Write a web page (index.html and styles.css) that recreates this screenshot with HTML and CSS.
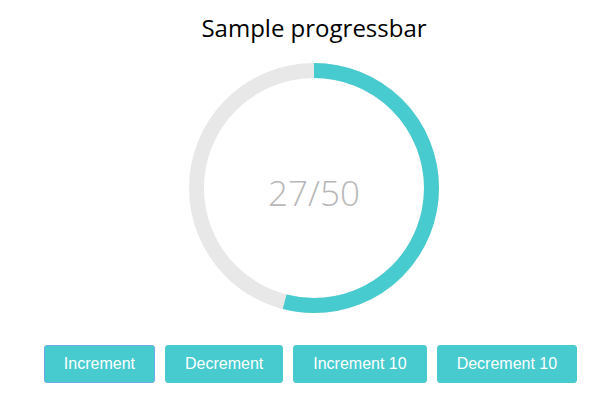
FILE: index.html
```html
<!DOCTYPE html>
<html lang="en">
<head>
<meta charset="utf-8">
<title>Sample progressbar</title>
<link rel="stylesheet" href="styles.css">
</head>
<body>
<main class="app">
  <h1 class="title">Sample progressbar</h1>
  <div class="ring-wrap">
    <svg class="ring" width="252" height="252" viewBox="0 0 252 252">
      <circle class="ring-track" cx="126" cy="126" r="117.5"></circle>
      <!-- 27 of 50: circumference 738.27, filled 398.67 -->
      <circle class="ring-fill" cx="126" cy="126" r="117.5" transform="rotate(-90 126 126)" style="stroke-dasharray: 398.67 738.27"></circle>
      <text class="ring-label" x="126" y="144">27/50</text>
    </svg>
  </div>
  <div class="actions">
    <button class="btn btn-focus" type="button">Increment</button>
    <button class="btn" type="button">Decrement</button>
    <button class="btn" type="button">Increment 10</button>
    <button class="btn" type="button">Decrement 10</button>
  </div>
</main>
</body>
</html>
```
FILE: styles.css
```css
html, body {
  margin: 0;
  padding: 0;
  background: #ffffff;
}

.app {
  width: 615px;
  display: flex;
  flex-direction: column;
  align-items: center;
}

.title {
  margin: 12px 0 0 13px;
  font-family: "Open Sans", sans-serif;
  font-weight: 400;
  font-size: 24px;
  line-height: 32px;
  color: #000000;
}

.ring-wrap {
  margin: 18px 0 0 13px;
  display: flex;
}

.ring {
  display: block;
}

.ring-track,
.ring-fill {
  fill: none;
  stroke-width: 15;
}

.ring-track {
  stroke: #e8e8e8;
}

.ring-fill {
  stroke: #47cbcf;
}

.ring-label {
  font-family: "Open Sans", sans-serif;
  font-weight: 300;
  font-size: 35px;
  fill: #b8b8b8;
  text-anchor: middle;
}

.actions {
  margin: 31px 0 0 6px;
  display: flex;
  gap: 10px;
}

.btn {
  height: 38px;
  padding: 0 19px;
  border: 1px solid #47cbcf;
  border-radius: 3px;
  background: #47cbcf;
  color: #ffffff;
  font-family: "Liberation Sans", Arial, sans-serif;
  font-size: 16px;
  line-height: 36px;
  cursor: pointer;
}

.btn-focus {
  border-color: #6aa9e6;
}
```
